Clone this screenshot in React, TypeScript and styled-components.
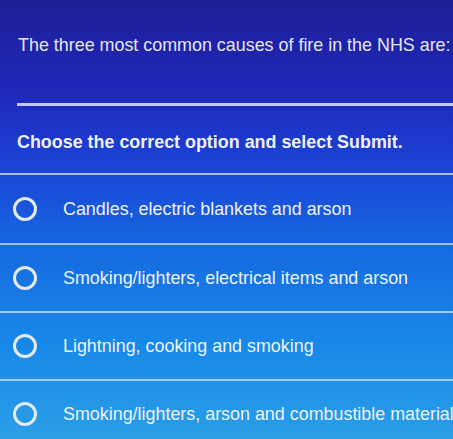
import styled, { createGlobalStyle } from 'styled-components';

const GlobalStyle = createGlobalStyle`
  html, body {
    margin: 0;
    padding: 0;
  }
  body {
    font-family: "Liberation Sans", Arial, sans-serif;
  }
`;

const Screen = styled.div`
  width: 453px;
  height: 439px;
  overflow: hidden;
  display: flex;
  flex-direction: column;
  background: linear-gradient(
    180deg,
    #1e1e96 0%,
    #1f28bc 22%,
    #1a44d6 38%,
    #166ce2 58%,
    #1888e8 78%,
    #2a9ee6 100%
  );
  color: #eceff8;
  box-sizing: border-box;
`;

const Question = styled.div`
  flex: none;
  padding: 34px 0 0 18px;
  font-size: 17.9px;
  line-height: 22px;
  white-space: nowrap;
  color: #e4e6f0;
  height: 103px;
  box-sizing: border-box;
`;

const ShortRule = styled.div`
  flex: none;
  margin-left: 17px;
  height: 3px;
  background: rgba(225, 232, 245, 0.85);
`;

const Instruction = styled.div`
  flex: none;
  padding: 25px 0 0 17px;
  height: 67px;
  font-size: 17.9px;
  font-weight: bold;
  line-height: 22px;
  white-space: nowrap;
  color: #eef0f8;
  box-sizing: border-box;
`;

const Options = styled.div`
  flex: none;
  display: flex;
  flex-direction: column;
  border-top: 2px solid rgba(220, 230, 245, 0.75);
`;

const Option = styled.label<{ $first?: boolean }>`
  flex: none;
  height: ${(p) => (p.$first ? 70 : 68)}px;
  display: flex;
  align-items: center;
  gap: 26px;
  padding-left: 13px;
  border-bottom: 2px solid rgba(220, 232, 245, 0.7);
  font-size: 17.9px;
  white-space: nowrap;
  color: #eef1f8;
  cursor: pointer;
  box-sizing: border-box;
`;

const Radio = styled.span`
  flex: none;
  width: 24px;
  height: 24px;
  border-radius: 50%;
  border: 3px solid #e4e9f2;
  box-sizing: border-box;
`;

const options = [
  'Candles, electric blankets and arson',
  'Smoking/lighters, electrical items and arson',
  'Lightning, cooking and smoking',
  'Smoking/lighters, arson and combustible materials',
];

export default function App() {
  return (
    <>
      <GlobalStyle />
      <Screen>
        <Question>The three most common causes of fire in the NHS are:</Question>
        <ShortRule />
        <Instruction>Choose the correct option and select Submit.</Instruction>
        <Options>
          {options.map((text, i) => (
            <Option key={text} $first={i === 0}>
              <Radio />
              {text}
            </Option>
          ))}
        </Options>
      </Screen>
    </>
  );
}
